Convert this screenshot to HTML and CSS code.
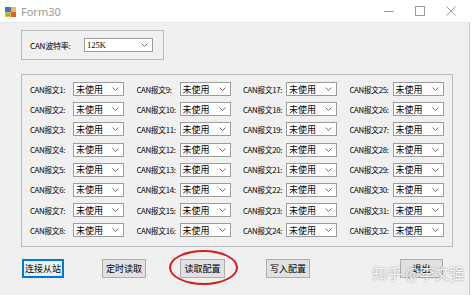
FILE: index.html
```html
<!DOCTYPE html>
<html lang="zh-CN">
<head>
  <meta charset="UTF-8" />
  <meta name="viewport" content="width=device-width, initial-scale=1.0"/>
  <title>Form30</title>
  <link rel="stylesheet" href="styles.css">
</head>
<body>
  <div class="titlebar">
    <svg class="app-icon" width="11" height="10" viewBox="0 0 11 10">
      <rect x="0" y="0" width="11" height="10" fill="#f3b74a"/>
      <rect x="0" y="0" width="6" height="5" fill="#3b78c4"/>
      <rect x="6" y="5" width="5" height="5" fill="#d9642b"/>
      <rect x="1" y="6" width="4" height="3" fill="#8fb34a"/>
    </svg>
    <span class="title">Form30</span>
    <div class="win-controls">
      <span class="win-btn"><svg width="10" height="10" viewBox="0 0 10 10"><line x1="0" y1="5.5" x2="10" y2="5.5" stroke="#9a9a9a"/></svg></span>
      <span class="win-btn"><svg width="10" height="10" viewBox="0 0 10 10"><rect x="0.5" y="0.5" width="9" height="9" fill="none" stroke="#9a9a9a"/></svg></span>
      <span class="win-btn"><svg width="10" height="10" viewBox="0 0 10 10"><path d="M0.5 0.5 L9.5 9.5 M9.5 0.5 L0.5 9.5" stroke="#9a9a9a"/></svg></span>
    </div>
  </div>

  <div class="client">
    <div class="group group-baud">
      <span class="baud-label">CAN波特率:</span>
      <div class="combo combo-baud">
        <span class="combo-text latin">125K</span>
        <svg class="chev" width="7" height="4" viewBox="0 0 7 4"><polyline points="0.5,0.5 3.5,3.5 6.5,0.5" fill="none" stroke="#707070"/></svg>
      </div>
    </div>

    <div class="group group-msgs">
      <div class="msg-grid" id="msgGrid"></div>
    </div>

    <div class="button-row">
      <button class="btn btn-focus">连接从站</button>
      <button class="btn btn-timer">定时读取</button>
      <div class="circled">
        <button class="btn btn-read">读取配置</button>
        <span class="red-ring"></span>
      </div>
      <button class="btn btn-write">写入配置</button>
      <button class="btn btn-exit">退出</button>
    </div>

    <div class="watermark">知乎 @李文强</div>
  </div>

  <script>
    const grid = document.getElementById("msgGrid");
    // 32 messages, filled column by column (8 rows x 4 columns)
    for (let row = 0; row < 8; row++) {
      for (let col = 0; col < 4; col++) {
        const n = col * 8 + row + 1;
        const cell = document.createElement("div");
        cell.className = "msg";
        cell.innerHTML = `<span class="msg-label">CAN报文${n}:</span>
          <div class="combo"><span class="combo-text">未使用</span>
          <svg class="chev" width="7" height="4" viewBox="0 0 7 4"><polyline points="0.5,0.5 3.5,3.5 6.5,0.5" fill="none" stroke="#707070"/></svg></div>`;
        grid.appendChild(cell);
      }
    }
  </script>
</body>
</html>
```

FILE: styles.css
```css
body {
  margin: 0;
  width: 474px;
  height: 295px;
  overflow: hidden;
  background: #ffffff;
  font-family: "Noto Sans CJK SC", "Noto Sans", sans-serif;
  color: #000;
}

.titlebar {
  height: 22px;
  display: flex;
  align-items: center;
  background: #ffffff;
}

.app-icon {
  margin-left: 5px;
  margin-top: 1px;
}

.title {
  margin-left: 5px;
  font-family: "Noto Sans", sans-serif;
  font-size: 11px;
  color: #9a9a9a;
}

.win-controls {
  margin-left: auto;
  display: flex;
  margin-right: 8px;
}

.win-btn {
  width: 31px;
  height: 22px;
  display: flex;
  align-items: center;
  justify-content: center;
}

.client {
  position: relative;
  width: 470px;
  height: 273px;
  background: #f0f0f0;
  border-right: 1px solid #c9c9c9;
  border-top: 1px solid #e6e6e6;
  box-sizing: border-box;
  padding-top: 7px;
}

.group {
  border: 1px solid #b9b9b9;
  box-sizing: border-box;
  margin-left: 21px;
}

.group-baud {
  width: 143px;
  height: 30px;
  display: flex;
  align-items: center;
  padding-left: 8px;
}

.baud-label {
  width: 54px;
  font-size: 8px;
  letter-spacing: -0.2px;
}

.combo {
  height: 14px;
  width: 51px;
  box-sizing: border-box;
  border: 1px solid #9c9c9c;
  background: #ffffff;
  display: flex;
  align-items: center;
  padding-left: 2px;
}

.combo-baud {
  width: 69px;
}

.combo-text {
  font-size: 9px;
  line-height: 1;
}

.combo-text.latin {
  font-family: "Liberation Serif", serif;
  font-size: 8.5px;
}

.chev {
  margin-left: auto;
  margin-right: 4px;
}

.group-msgs {
  margin-top: 14px;
  width: 432px;
  height: 173px;
  padding: 7px 0 0 8px;
}

.msg-grid {
  display: grid;
  grid-template-columns: repeat(4, 94px);
  grid-auto-rows: 14px;
  column-gap: 12.5px;
  row-gap: 6.2px;
}

.msg {
  display: flex;
  align-items: center;
}

.msg-label {
  width: 43px;
  flex-shrink: 0;
  font-size: 7.8px;
  white-space: nowrap;
  letter-spacing: -0.35px;
  overflow: hidden;
}

.button-row {
  display: flex;
  align-items: center;
  margin-top: 12px;
  padding-left: 22px;
}

.btn {
  height: 19px;
  padding: 0;
  font-family: "Noto Sans CJK SC", sans-serif;
  font-size: 9px;
  background: #e1e1e1;
  border: 1px solid #adadad;
  color: #000;
}

.btn-focus {
  width: 42px;
  background: #e5f1fb;
  border: 2px solid #0078d7;
}

.btn-timer { width: 44px; margin-left: 38px; }
.circled { position: relative; display: flex; margin-left: 34px; }
.btn-read { width: 45px; }
.btn-write { width: 44px; margin-left: 41px; }
.btn-exit { width: 43px; margin-left: 90px; }

.red-ring {
  position: absolute;
  left: -11px;
  top: -9px;
  width: 69px;
  height: 35px;
  border: 2px solid #d11f1f;
  border-radius: 50%;
  box-sizing: border-box;
}

.watermark {
  position: absolute;
  left: 372px;
  top: 239px;
  font-size: 15px;
  color: rgba(255, 255, 255, 0.9);
  text-shadow: 0 0 2px rgba(0, 0, 0, 0.45);
  white-space: nowrap;
}
```
